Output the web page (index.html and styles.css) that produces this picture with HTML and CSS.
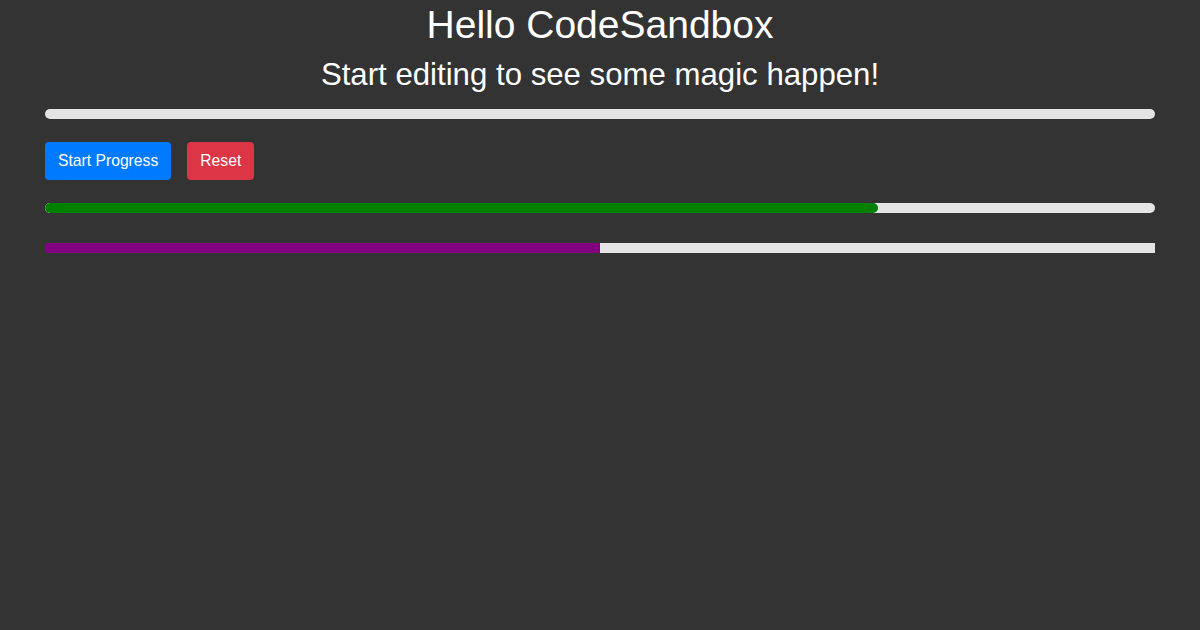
FILE: index.html
```html
<!DOCTYPE html>
<html lang="en">
<head>
    <meta charset="UTF-8">
    <meta name="viewport" content="width=device-width, initial-scale=1.0">
    <title>Progress Bars</title>
    <link rel="stylesheet" href="styles.css">
</head>
<body>
    <div class="App">
        <h1>Hello CodeSandbox</h1>
        <h2>Start editing to see some magic happen!</h2>
        <div class="container">
            <div class="progress"><div class="progress-fill" style="width: 0%"></div></div>
            <div class="buttons">
                <button class="btn btn-primary">Start Progress</button>
                <button class="btn btn-danger">Reset</button>
            </div>
            <div class="progress"><div class="progress-fill green" style="width: 75%"></div></div>
            <div class="progress square"><div class="progress-fill purple" style="width: 50%"></div></div>
        </div>
    </div>
</body>
</html>
```

FILE: styles.css
```css
body {
    margin: 0;
    background-color: #333333;
    color: #ffffff;
    font-family: "Liberation Sans", Arial, sans-serif;
}
.App {
    text-align: center;
}
.App h1 {
    margin: 3px 0 0;
    font-size: 39px;
    font-weight: normal;
}
.App h2 {
    margin: 10px 0 0;
    font-size: 31.2px;
    font-weight: normal;
}
.container {
    max-width: 1110px;
    margin: 0 auto;
    padding: 16px 15px 0;
    text-align: left;
}
.progress {
    height: 10px;
    background-color: #e4e4e4;
    border-radius: 5px;
    overflow: hidden;
}
.progress.square {
    border-radius: 0;
    margin-top: 30px;
}
.progress-fill {
    height: 100%;
    border-radius: 5px;
}
.progress.square .progress-fill {
    border-radius: 0;
}
.progress-fill.green {
    background-color: green;
}
.progress-fill.purple {
    background-color: purple;
}
.buttons {
    display: flex;
    gap: 16px;
    margin: 23px 0;
}
.btn {
    font-family: "Liberation Sans", Arial, sans-serif;
    font-size: 15.7px;
    line-height: 24px;
    padding: 7px 13px;
    border: none;
    border-radius: 4px;
    color: #ffffff;
    cursor: pointer;
}
.btn-primary {
    background-color: #007bff;
}
.btn-danger {
    background-color: #dc3545;
}
```
